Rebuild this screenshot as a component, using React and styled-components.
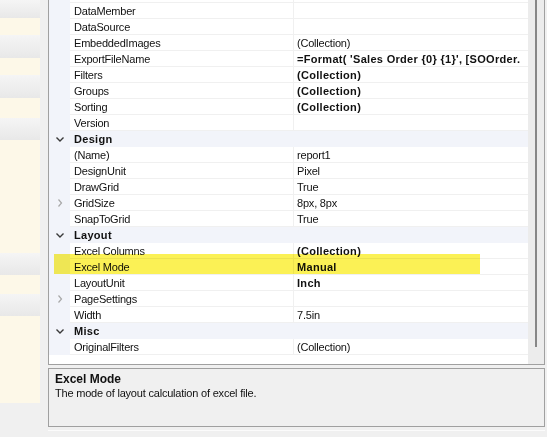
import React from 'react';
import styled, { createGlobalStyle } from 'styled-components';

const GlobalStyle = createGlobalStyle`
    body {
        margin: 0;
        background: #f0f0f0;
        font-family: "Liberation Sans", Arial, sans-serif;
    }
`;

const Frame = styled.div`
    display: flex;
    width: 547px;
    height: 437px;
    overflow: hidden;
    background: #f0f0f0;
`;

const LeftStrip = styled.div`
    display: flex;
    flex-direction: column;
    width: 40px;
    height: 403px;
    background: #fdf8e8;
`;

const Band = styled.div`
    flex: none;
    height: ${p => p.$h}px;
    background: ${p => (p.$tone === 'gray'
        ? 'linear-gradient(to bottom, #f5f5f5, #e8e8e8)'
        : '#fdf8e8')};
`;

const RightPane = styled.div`
    display: flex;
    flex-direction: column;
    width: 497px;
    margin-left: 8px;
`;

const Grid = styled.div`
    display: flex;
    height: 365px;
    box-sizing: border-box;
    border: 1px solid #a0a0a0;
    border-top: none;
    background: #fff;
`;

const Rows = styled.div`
    flex: 1;
    overflow: hidden;
    font-size: 11px;
    letter-spacing: -0.2px;
    color: #111;
`;

const Row = styled.div`
    position: relative;
    display: grid;
    grid-template-columns: 21px 224px 1fr;
    height: ${p => p.$h || 16}px;
    line-height: 14px;
    background: ${p => (p.$category ? '#f2f4fa' : '#fff')};
`;

const Gutter = styled.div`
    display: flex;
    align-items: center;
    justify-content: center;
    background: #f2f4fa;
`;

const NameCell = styled.div`
    box-sizing: border-box;
    padding: 1px 0 0 4px;
    border-bottom: 1px solid #f0f0f0;
    border-right: 1px solid #f0f0f0;
    white-space: nowrap;
    overflow: hidden;
`;

const ValueCell = styled.div`
    box-sizing: border-box;
    padding: 1px 0 0 3px;
    border-bottom: 1px solid #f0f0f0;
    white-space: nowrap;
    overflow: hidden;
    font-weight: ${p => (p.$bold ? 700 : 400)};
    letter-spacing: ${p => (p.$bold ? '0.3px' : '-0.2px')};
`;

const CategoryLabel = styled.div`
    grid-column: 2 / 4;
    padding: 1px 0 0 4px;
    font-weight: 700;
    letter-spacing: 0.3px;
    border-bottom: 1px solid #f2f4fa;
`;

const Highlight = styled.div`
    position: absolute;
    left: 5px;
    top: -5px;
    width: 426px;
    height: 20px;
    background: #fbf155;
    mix-blend-mode: multiply;
    filter: blur(0.6px);
    pointer-events: none;
`;

const ScrollTrack = styled.div`
    width: 16px;
    background: #ececec;
`;

const Thumb = styled.div`
    width: 2px;
    height: 347px;
    margin-left: 7px;
    background: #878787;
`;

const Description = styled.div`
    margin-top: 3px;
    height: 59px;
    box-sizing: border-box;
    padding: 3px 6px;
    border: 1px solid #a0a0a0;
    background: #f0f0f0;
    color: #111;
`;

const DescTitle = styled.div`
    font-size: 12px;
    font-weight: 700;
    line-height: 14px;
`;

const DescText = styled.div`
    font-size: 11px;
    letter-spacing: -0.2px;
    line-height: 14px;
`;

const Footer = styled.div`
    margin-top: 3px;
    border-top: 1px solid #fbfbfb;
    height: 6px;
`;

const ChevronDown = () => (
    <svg width="10" height="7" viewBox="0 0 10 7">
        <polyline points="1.5,1.5 5,5 8.5,1.5" fill="none" stroke="#3a3a3a" strokeWidth="1.4" />
    </svg>
);

const ChevronRight = () => (
    <svg width="6" height="10" viewBox="0 0 6 10">
        <polyline points="1.5,1.5 4.5,5 1.5,8.5" fill="none" stroke="#a8a8a8" strokeWidth="1.2" />
    </svg>
);

const bands = [
    ['gray', 18], ['cream', 17], ['gray', 23], ['cream', 17], ['gray', 23], ['cream', 20],
    ['gray', 22], ['cream', 113], ['gray', 22], ['cream', 19], ['gray', 22], ['cream', 87],
];

const properties = [
    { name: 'DataMember' },
    { name: 'DataSource' },
    { name: 'EmbeddedImages', value: '(Collection)' },
    { name: 'ExportFileName', value: "=Format( 'Sales Order {0} {1}', [SOOrder.", bold: true },
    { name: 'Filters', value: '(Collection)', bold: true },
    { name: 'Groups', value: '(Collection)', bold: true },
    { name: 'Sorting', value: '(Collection)', bold: true },
    { name: 'Version' },
    { category: 'Design' },
    { name: '(Name)', value: 'report1' },
    { name: 'DesignUnit', value: 'Pixel' },
    { name: 'DrawGrid', value: 'True' },
    { name: 'GridSize', value: '8px, 8px', expandable: true },
    { name: 'SnapToGrid', value: 'True' },
    { category: 'Layout' },
    { name: 'Excel Columns', value: '(Collection)', bold: true },
    { name: 'Excel Mode', value: 'Manual', bold: true, marked: true },
    { name: 'LayoutUnit', value: 'Inch', bold: true },
    { name: 'PageSettings', expandable: true },
    { name: 'Width', value: '7.5in' },
    { category: 'Misc' },
    { name: 'OriginalFilters', value: '(Collection)' },
];

function PropertyRow({ item }) {
    if (item.category) {
        return (
            <Row $category>
                <Gutter><ChevronDown /></Gutter>
                <CategoryLabel>{item.category}</CategoryLabel>
            </Row>
        );
    }
    return (
        <Row>
            <Gutter>{item.expandable && <ChevronRight />}</Gutter>
            <NameCell>{item.name}</NameCell>
            <ValueCell $bold={item.bold}>{item.value}</ValueCell>
            {item.marked && <Highlight />}
        </Row>
    );
}

export default function App() {
    return (
        <Frame>
            <GlobalStyle />
            <LeftStrip>
                {bands.map(([tone, h], i) => <Band key={i} $tone={tone} $h={h} />)}
            </LeftStrip>
            <RightPane>
                <Grid>
                    <Rows>
                        <Row $h={3}>
                            <Gutter />
                            <NameCell />
                            <ValueCell />
                        </Row>
                        {properties.map((item, i) => <PropertyRow key={i} item={item} />)}
                    </Rows>
                    <ScrollTrack>
                        <Thumb />
                    </ScrollTrack>
                </Grid>
                <Description>
                    <DescTitle>Excel Mode</DescTitle>
                    <DescText>The mode of layout calculation of excel file.</DescText>
                </Description>
                <Footer />
            </RightPane>
        </Frame>
    );
}
